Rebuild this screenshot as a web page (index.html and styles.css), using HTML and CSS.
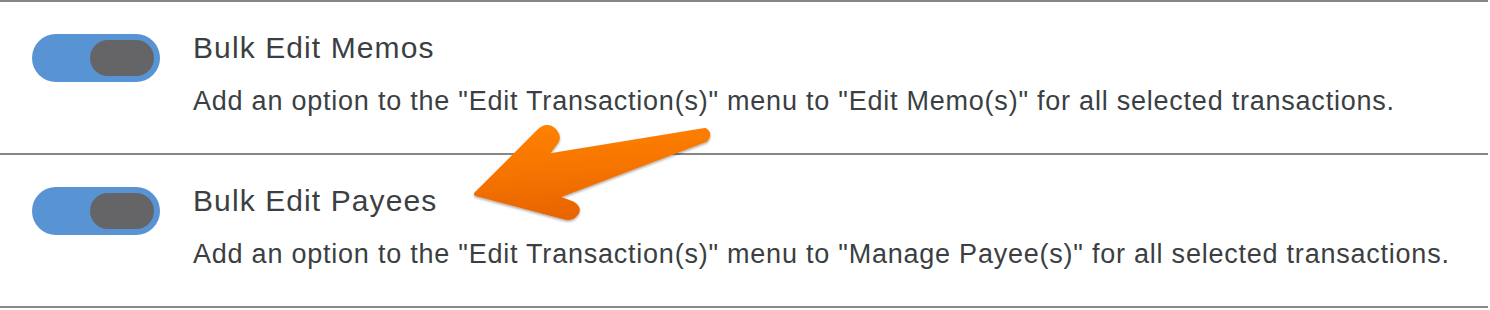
FILE: index.html
```html
<!DOCTYPE html>
<html>
<head>
<meta charset="utf-8">
<link rel="stylesheet" href="styles.css">
</head>
<body>
<div class="list">
  <div class="row">
    <div class="toggle"><span class="knob"></span></div>
    <div class="text">
      <div class="title">Bulk Edit Memos</div>
      <div class="desc">Add an option to the "Edit Transaction(s)" menu to "Edit Memo(s)" for all selected transactions.</div>
    </div>
  </div>
  <div class="row">
    <div class="toggle"><span class="knob"></span></div>
    <div class="text">
      <div class="title">Bulk Edit Payees</div>
      <div class="desc">Add an option to the "Edit Transaction(s)" menu to "Manage Payee(s)" for all selected transactions.</div>
    </div>
  </div>
</div>
<svg class="arrow" width="1490" height="310" viewBox="0 0 1490 310">
  <defs>
    <linearGradient id="g" x1="0" y1="0" x2="0.15" y2="1">
      <stop offset="0" stop-color="#ff8200"/>
      <stop offset="0.55" stop-color="#f57300"/>
      <stop offset="1" stop-color="#e86505"/>
    </linearGradient>
    <filter id="sh" x="-10%" y="-10%" width="120%" height="130%">
      <feDropShadow dx="0" dy="1.5" stdDeviation="1.2" flood-color="#000" flood-opacity="0.35"/>
    </filter>
  </defs>
  <path filter="url(#sh)" fill="url(#g)" stroke="url(#g)" stroke-width="4" stroke-linejoin="round"
    d="M476 194 L538 132 Q547 123 555 131 Q561 138 554 145 L546 156 L705 130 Q711 134 706 140 L556 197 L572 203 Q581 208 576 214 Q572 220 563 217 Z"/>
</svg>
</body>
</html>
```
FILE: styles.css
```css
html, body {
  margin: 0;
  padding: 0;
  background: #fff;
}
body {
  width: 1490px;
  height: 310px;
  position: relative;
  overflow: hidden;
  font-family: "Liberation Sans", Arial, sans-serif;
  color: #3b3f43;
}
.list {
  width: 1488px;
  border-top: 2px solid #878787;
}
.row {
  display: flex;
  align-items: flex-start;
  height: 151px;
  border-bottom: 2px solid #878787;
  box-sizing: content-box;
}
.toggle {
  margin: 32px 0 0 32px;
  width: 128px;
  height: 48px;
  border-radius: 24px;
  background: #5893d4;
  display: flex;
  align-items: center;
  justify-content: flex-end;
  padding-right: 6px;
  box-sizing: border-box;
  flex-shrink: 0;
}
.knob {
  width: 64px;
  height: 36px;
  border-radius: 18px;
  background: #656567;
}
.text {
  margin-left: 33px;
  padding-top: 29px;
  white-space: nowrap;
}
.title {
  font-size: 30px;
  line-height: 34px;
  letter-spacing: 1.1px;
}
.desc {
  margin-top: 20px;
  font-size: 27px;
  line-height: 32px;
  letter-spacing: 0.77px;
}
.arrow {
  position: absolute;
  left: 0;
  top: 0;
  pointer-events: none;
}
```
